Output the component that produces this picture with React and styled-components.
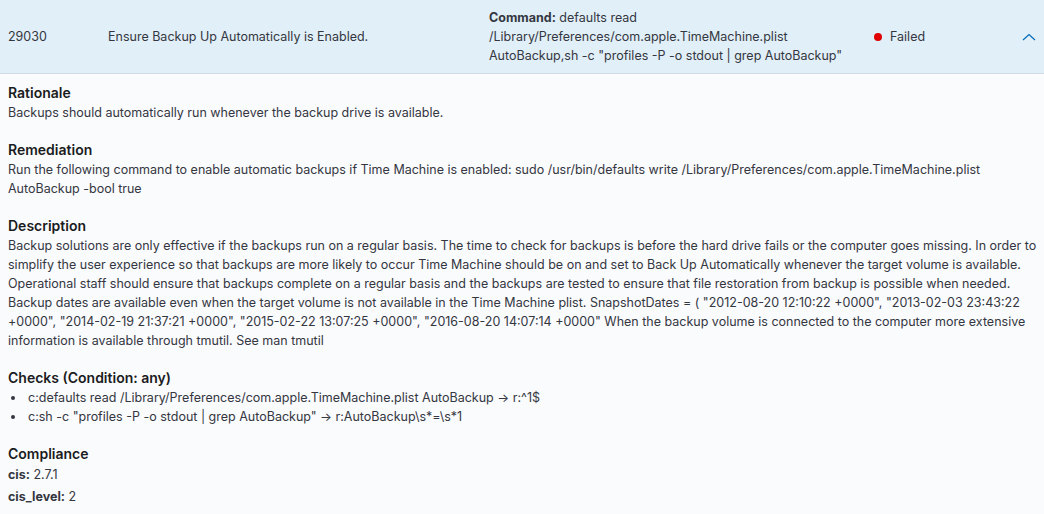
import React from "react";
import styled, { createGlobalStyle } from "styled-components";

const Global = createGlobalStyle`
  html, body { margin: 0; padding: 0; background: #fafbfd; }
  body {
    font-family: Inter, "Noto Sans", sans-serif;
    font-size: 12.5px;
    color: #343741;
    -webkit-font-smoothing: antialiased;
  }
`;

const Row = styled.div`
  display: grid;
  grid-template-columns: 100px 381px 385px 1fr 24px;
  align-items: center;
  padding: 8px;
  background: #e1eff8;
  border-bottom: 1px solid #d3dae6;
  line-height: 19px;
`;

const Cell = styled.div`
  padding-right: ${(p) => p.$pr || 0}px;
`;

const Label = styled.b`
  font-weight: 700;
  color: #343741;
`;

const Status = styled.div`
  display: flex;
  align-items: center;
  gap: 8px;
`;

const Dot = styled.span`
  width: 8px;
  height: 8px;
  border-radius: 50%;
  background: #e00000;
  flex: none;
`;

const Chevron = styled.div`
  display: flex;
  justify-content: flex-end;
  color: #006bb8;
`;

const Panel = styled.div`
  padding: 8px 2px 8px 8px;
  background: #fafbfd;
`;

const Section = styled.section`
  margin-bottom: 17px;
`;

const Heading = styled.h3`
  margin: 0;
  font-size: 14px;
  line-height: 21px;
  font-weight: 600;
  color: #1a1c21;
`;

const Text = styled.p`
  margin: 0;
  line-height: 19px;
`;

const List = styled.ul`
  margin: 0;
  padding: 0;
  list-style: none;
`;

const Item = styled.li`
  position: relative;
  padding-left: 20px;
  line-height: 19px;
  &::before {
    content: "";
    position: absolute;
    left: 3px;
    top: 8px;
    width: 4px;
    height: 4px;
    border-radius: 50%;
    background: #343741;
  }
`;

const Field = styled.div`
  line-height: 19px;
  margin-top: ${(p) => (p.$first ? 1 : 3)}px;
`;

const Key = styled.b`
  font-weight: 700;
`;

export default function App() {
  return (
    <>
      <Global />
      <Row>
        <Cell>29030</Cell>
        <Cell>Ensure Backup Up Automatically is Enabled.</Cell>
        <Cell $pr={30}>
          <Label>Command:</Label> defaults read /Library/Preferences/com.apple.TimeMachine.plist AutoBackup,sh -c "profiles -P -o stdout | grep AutoBackup"
        </Cell>
        <Cell>
          <Status>
            <Dot />
            <span>Failed</span>
          </Status>
        </Cell>
        <Chevron>
          <svg width="14" height="8" viewBox="0 0 14 8" fill="none">
            <polyline points="1,7 7,1.5 13,7" stroke="currentColor" strokeWidth="1.2" />
          </svg>
        </Chevron>
      </Row>
      <Panel>
        <Section>
          <Heading>Rationale</Heading>
          <Text>Backups should automatically run whenever the backup drive is available.</Text>
        </Section>
        <Section>
          <Heading>Remediation</Heading>
          <Text>
            Run the following command to enable automatic backups if Time Machine is enabled: sudo /usr/bin/defaults write /Library/Preferences/com.apple.TimeMachine.plist AutoBackup -bool true
          </Text>
        </Section>
        <Section>
          <Heading>Description</Heading>
          <Text>
            Backup solutions are only effective if the backups run on a regular basis. The time to check for backups is before the hard drive fails or the computer goes missing. In order to simplify the user experience so that backups are more likely to occur Time Machine should be on and set to Back Up Automatically whenever the target volume is available. Operational staff should ensure that backups complete on a regular basis and the backups are tested to ensure that file restoration from backup is possible when needed. Backup dates are available even when the target volume is not available in the Time Machine plist. SnapshotDates = ( "2012-08-20 12:10:22 +0000", "2013-02-03 23:43:22 +0000", "2014-02-19 21:37:21 +0000", "2015-02-22 13:07:25 +0000", "2016-08-20 14:07:14 +0000" When the backup volume is connected to the computer more extensive information is available through tmutil. See man tmutil
          </Text>
        </Section>
        <Section>
          <Heading>Checks (Condition: any)</Heading>
          <List>
            <Item>c:defaults read /Library/Preferences/com.apple.TimeMachine.plist AutoBackup → r:^1$</Item>
            <Item>c:sh -c "profiles -P -o stdout | grep AutoBackup" → r:AutoBackup\s*=\s*1</Item>
          </List>
        </Section>
        <Section>
          <Heading>Compliance</Heading>
          <Field $first>
            <Key>cis:</Key> 2.7.1
          </Field>
          <Field>
            <Key>cis_level:</Key> 2
          </Field>
        </Section>
      </Panel>
    </>
  );
}
